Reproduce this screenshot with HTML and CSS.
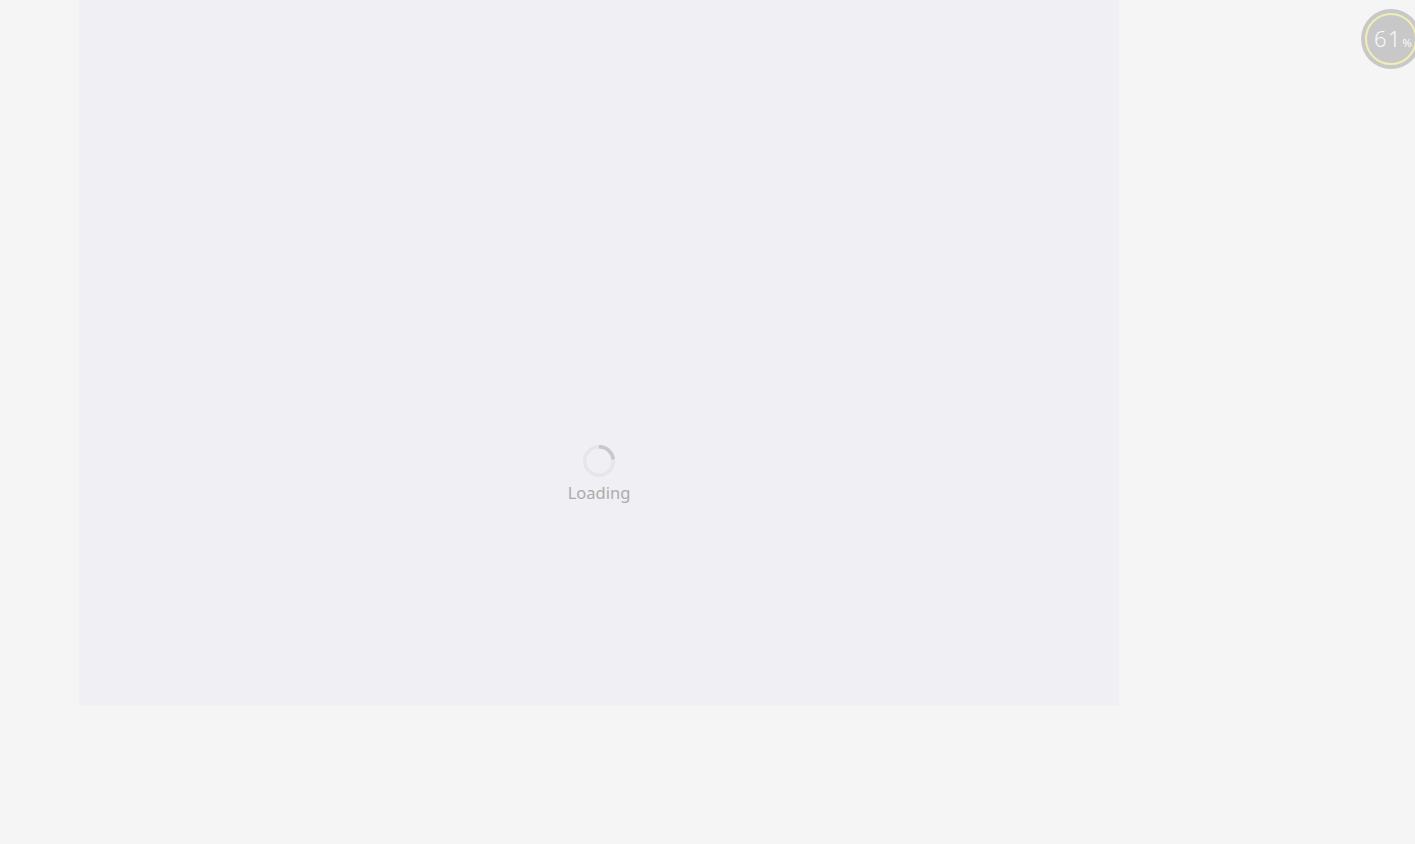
FILE: index.html
```html
<!DOCTYPE html>
<html lang="en">
<head>
<meta charset="utf-8">
<title>Loading</title>
<link rel="stylesheet" href="styles.css">
</head>
<body>
<main class="panel">
  <div class="loader">
    <svg class="spinner" width="32" height="32" viewBox="0 0 32 32" aria-hidden="true">
      <circle class="spinner-track" cx="16" cy="16" r="14.25"/>
      <path class="spinner-arc" d="M16 1.75A14.25 14.25 0 0 1 30.2 14.5"/>
    </svg>
    <div class="loader-text">Loading</div>
  </div>
</main>
<div class="badge">
  <div class="badge-ring"><span class="badge-num">61</span><span class="badge-unit">%</span></div>
</div>
</body>
</html>
```
FILE: styles.css
```css
html, body {
  margin: 0;
  height: 100%;
}
body {
  background: #f5f5f5;
  overflow: hidden;
  font-family: "Noto Sans", "Open Sans", sans-serif;
}
.panel {
  width: 1040px;
  height: 706px;
  margin-left: 79px;
  background: #f0eff4;
  display: flex;
  justify-content: center;
  padding-top: 445px;
  box-sizing: border-box;
}
.loader {
  display: flex;
  flex-direction: column;
  align-items: center;
}
.spinner { display: block; }
.spinner-track {
  fill: none;
  stroke: #e6e6e8;
  stroke-width: 3.5;
}
.spinner-arc {
  fill: none;
  stroke: #c8c8c8;
  stroke-width: 3.5;
}
.loader-text {
  margin-top: 4px;
  font-size: 16.5px;
  line-height: 24px;
  color: #ababab;
}
.badge {
  position: absolute;
  left: 1361px;
  top: 9px;
  width: 60px;
  height: 60px;
  border-radius: 50%;
  background: #c8c8c8;
  display: flex;
  align-items: center;
  justify-content: center;
}
.badge-ring {
  width: 48px;
  height: 48px;
  border: 2px solid #f0eeb4;
  border-radius: 50%;
  display: flex;
  align-items: baseline;
  color: #f8f8f8;
  line-height: 46px;
}
.badge-num {
  margin-left: 7px;
  font-size: 22px;
  letter-spacing: 1.5px;
  font-weight: 300;
}
.badge-unit {
  font-size: 11.5px;
}
```
